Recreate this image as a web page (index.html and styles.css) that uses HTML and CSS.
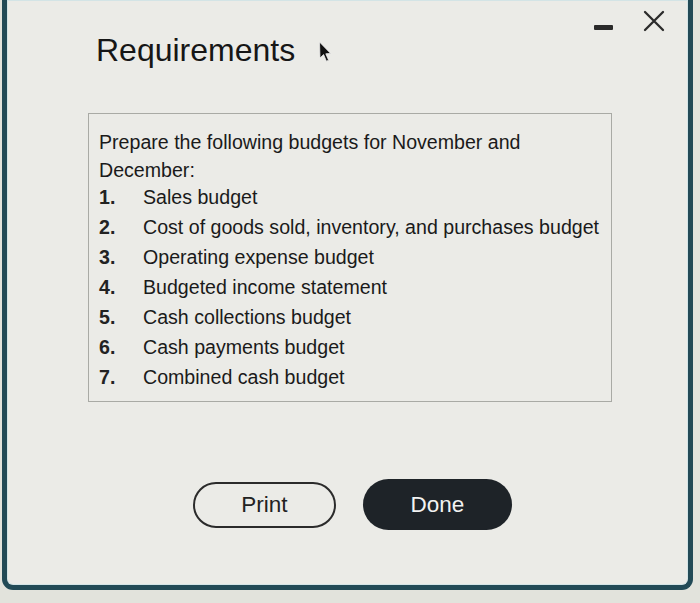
FILE: index.html
```html
<!DOCTYPE html>
<html>
<head>
<meta charset="utf-8">
<link rel="stylesheet" href="styles.css">
</head>
<body>
<div class="dialog">
  <div class="header">
    <div class="title-wrap">
      <h1 class="title">Requirements</h1>
      <svg class="cursor" width="14" height="22" viewBox="0 0 14 22"><path d="M1.5 1 L2 17 L5.6 13.6 L8.4 20.2 L10.6 19.2 L7.8 12.8 L12.6 12.4 Z" fill="#111" stroke="#eee" stroke-width="0.8" stroke-linejoin="round"/></svg>
    </div>
    <div class="controls">
      <span class="minimize"></span>
      <svg class="close" width="22" height="22" viewBox="0 0 22 22"><path d="M2 2 L20 20 M20 2 L2 20" stroke="#2b2b2b" stroke-width="2.3" stroke-linecap="round"/></svg>
    </div>
  </div>
  <div class="box">
    <p class="intro">Prepare the following budgets for November and December:</p>
    <ol class="list">
      <li><span class="num">1.</span><span>Sales budget</span></li>
      <li><span class="num">2.</span><span>Cost of goods sold, inventory, and purchases budget</span></li>
      <li><span class="num">3.</span><span>Operating expense budget</span></li>
      <li><span class="num">4.</span><span>Budgeted income statement</span></li>
      <li><span class="num">5.</span><span>Cash collections budget</span></li>
      <li><span class="num">6.</span><span>Cash payments budget</span></li>
      <li><span class="num">7.</span><span>Combined cash budget</span></li>
    </ol>
  </div>
  <div class="buttons">
    <button class="btn btn-print">Print</button>
    <button class="btn btn-done">Done</button>
  </div>
</div>
</body>
</html>
```
FILE: styles.css
```css
html, body {
  margin: 0;
  padding: 0;
}
body {
  width: 700px;
  height: 603px;
  overflow: hidden;
  background: #e2e3dc;
  font-family: "Liberation Sans", Arial, sans-serif;
  color: #1a1a1a;
}
.dialog {
  box-sizing: border-box;
  margin-left: 2px;
  width: 691px;
  height: 590px;
  background: #ebebe7;
  border: 5px solid #224a56;
  border-top: 0;
  border-radius: 0 0 11px 11px;
  box-shadow: inset 0 0 0 1px #d3e4e6;
  display: flex;
  flex-direction: column;
}
.header {
  display: flex;
  justify-content: space-between;
  align-items: flex-start;
  padding: 10px 23px 0 89px;
}
.title-wrap {
  display: flex;
  align-items: flex-start;
  margin-top: 22px;
}
.title {
  margin: 0;
  font-size: 32px;
  line-height: 36px;
  font-weight: normal;
  color: #161616;
}
.cursor {
  margin-left: 23px;
  margin-top: 9px;
}
.controls {
  display: flex;
  align-items: flex-start;
  gap: 30px;
}
.minimize {
  display: block;
  width: 19px;
  height: 5px;
  background: #2a2a2a;
  border-radius: 1px;
  margin-top: 15px;
}
.close {
  display: block;
}
.box {
  margin: 45px 0 0 81px;
  width: 524px;
  box-sizing: border-box;
  border: 1.5px solid #a9aaa5;
  padding: 14px 10px 9px 10px;
  font-size: 19.6px;
}
.intro {
  margin: 0;
  width: 505px;
  line-height: 28px;
}
.list {
  list-style: none;
  margin: -2px 0 0 0;
  padding: 0;
}
.list li {
  display: grid;
  grid-template-columns: 44px 1fr;
  line-height: 30px;
  white-space: nowrap;
}
.num {
  font-weight: bold;
  color: #222;
}
.buttons {
  display: flex;
  align-items: center;
  gap: 27px;
  margin: 77px 0 0 186px;
}
.btn {
  font-family: "Liberation Sans", Arial, sans-serif;
  font-size: 22.5px;
  height: 48px;
  border-radius: 24px;
  padding: 0;
  cursor: pointer;
}
.btn-print {
  width: 143px;
  background: transparent;
  border: 2px solid #2b2b2b;
  color: #222;
  height: 46px;
}
.btn-done {
  width: 149px;
  height: 51px;
  border-radius: 26px;
  background: #1e2328;
  border: 0;
  color: #f2f2f2;
}
```
